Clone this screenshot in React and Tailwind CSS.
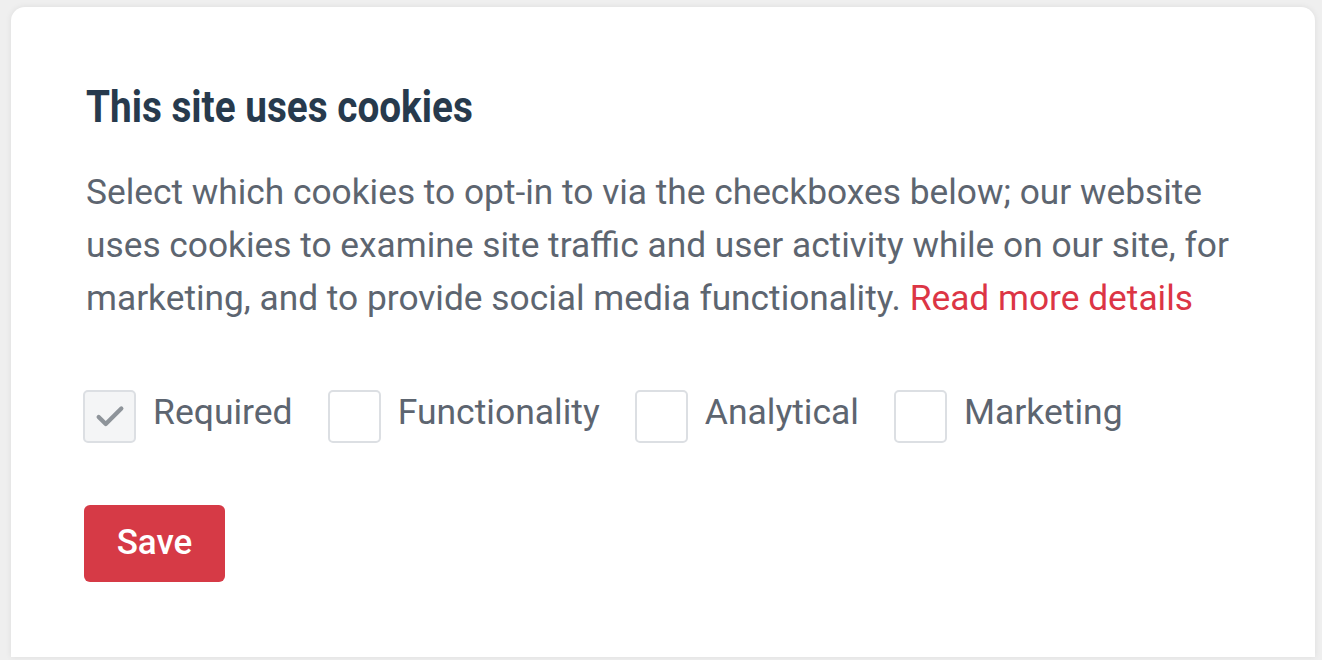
import { Check } from "lucide-react";

const OPTIONS = [
  { label: "Required", checked: true, disabled: true },
  { label: "Functionality" },
  { label: "Analytical" },
  { label: "Marketing" },
];

function CheckBox({ label, checked, disabled }) {
  return (
    <label className="flex items-start gap-[17px]">
      <span
        className={
          "flex h-[53px] w-[53px] items-center justify-center rounded-[5px] border-2 border-[#dcdfe3] " +
          (disabled ? "bg-[#f4f5f6]" : "bg-white")
        }
      >
        {checked && <Check size={34} strokeWidth={3} color="#8e949a" />}
      </span>
      <span className="-mt-[4px] leading-[53px] text-[#5d6570]">{label}</span>
    </label>
  );
}

export default function App() {
  return (
    <div
      className="h-[660px] w-[1322px] overflow-hidden bg-[#efefef] pt-[7px] pl-[11px] pr-[7px]"
      style={{ fontFamily: "Roboto, 'Liberation Sans', sans-serif" }}
    >
      <div className="h-[650px] rounded-t-[14px] bg-white pl-[75px] pt-[72px] shadow-[0_0_6px_rgba(0,0,0,0.08)]">
        {/* Title */}
        <h1 className="origin-left scale-x-[0.88] text-[44px] font-bold leading-[56px] text-[#273a4d]">
          This site uses cookies
        </h1>

        {/* Body copy */}
        <p className="mt-[31px] whitespace-nowrap text-[35.3px] leading-[53px] text-[#5d6570]">
          Select which cookies to opt-in to via the checkboxes below; our website
          <br />
          uses cookies to examine site traffic and user activity while on our site, for
          <br />
          marketing, and to provide social media functionality.{" "}
          <a href="#" className="text-[#dc3545]">
            Read more details
          </a>
        </p>

        {/* Options */}
        <div className="-ml-[3px] mt-[65px] flex gap-[35px] text-[35.5px]">
          {OPTIONS.map((o) => (
            <CheckBox key={o.label} {...o} />
          ))}
        </div>

        {/* Save */}
        <button className="-ml-[2px] mt-[62px] h-[77px] w-[141px] rounded-[6px] bg-[#d63a46] text-[35px] font-medium text-white">
          Save
        </button>
      </div>
    </div>
  );
}
